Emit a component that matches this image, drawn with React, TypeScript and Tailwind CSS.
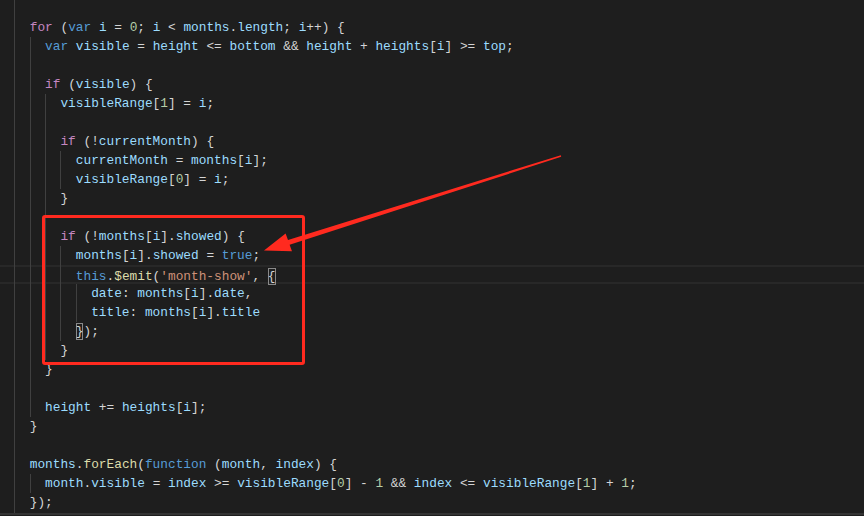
import React from "react";

// one char cell of the mono font (Liberation Mono @ 12.8px)
const CH = 7.68;

const code = [
  "",
  "    for (var i = 0; i < months.length; i++) {",
  "      var visible = height <= bottom && height + heights[i] >= top;",
  "",
  "      if (visible) {",
  "        visibleRange[1] = i;",
  "",
  "        if (!currentMonth) {",
  "          currentMonth = months[i];",
  "          visibleRange[0] = i;",
  "        }",
  "",
  "        if (!months[i].showed) {",
  "          months[i].showed = true;",
  "          this.$emit('month-show', {",
  "            date: months[i].date,",
  "            title: months[i].title",
  "          });",
  "        }",
  "      }",
  "",
  "      height += heights[i];",
  "    }",
  "",
  "    months.forEach(function (month, index) {",
  "      month.visible = index >= visibleRange[0] - 1 && index <= visibleRange[1] + 1;",
  "    });",
  "",
];

const CURRENT_LINE = 14;
// matched bracket pair: [line, col]
const boxed = new Set(["14:35", "17:10"]);

const control = new Set(["for", "if"]);
const storage = new Set(["var", "this", "true", "function"]);

type Tok = { text: string; color: string; col: number };

function tokenize(line: string): Tok[] {
  const re = /(\s+|'[^']*'|\d+|[A-Za-z_$][\w$]*|&&|<=|>=|\+=|\+\+|.)/g;
  const out: Tok[] = [];
  let m: RegExpExecArray | null;
  while ((m = re.exec(line))) {
    const t = m[0];
    const next = line[m.index + t.length];
    let color = "text-[#d4d4d4]";
    if (/^'/.test(t)) color = "text-[#ce9178]";
    else if (/^\d+$/.test(t)) color = "text-[#b5cea8]";
    else if (/^[A-Za-z_$]/.test(t)) {
      if (control.has(t)) color = "text-[#c586c0]";
      else if (storage.has(t)) color = "text-[#569cd6]";
      else if (next === "(") color = "text-[#dcdcaa]";
      else color = "text-[#9cdcfe]";
    }
    out.push({ text: t, color, col: m.index });
  }
  return out;
}

function indentOf(line: string) {
  return line.length - line.trimStart().length;
}

function guideCols(i: number): number[] {
  let ind: number;
  if (code[i].trim() === "") {
    let prev = -1;
    let next = -1;
    for (let j = i - 1; j >= 0; j--) if (code[j].trim()) { prev = indentOf(code[j]); break; }
    for (let j = i + 1; j < code.length; j++) if (code[j].trim()) { next = indentOf(code[j]); break; }
    ind = prev < 0 ? next : next < 0 ? prev : Math.min(prev, next);
    if (ind < 0) ind = 4;
  } else ind = indentOf(code[i]);
  const cols: number[] = [];
  for (let c = 2; c < ind; c += 2) cols.push(c);
  return cols;
}

function CodeLine({ line, idx }: { line: string; idx: number }) {
  const current = idx === CURRENT_LINE;
  return (
    <div
      className={`relative h-[19px] whitespace-pre leading-[19px] ${
        current ? "border-y-2 border-[#282828] leading-[15px]" : ""
      }`}
    >
      {guideCols(idx).map((c) => (
        <span
          key={c}
          className={`absolute w-px bg-[#404040] ${current ? "-top-[2px] -bottom-[2px]" : "inset-y-0"}`}
          style={{ left: c * CH }}
        />
      ))}
      {tokenize(line).map((t, k) =>
        boxed.has(`${idx}:${t.col}`) ? (
          <span
            key={k}
            className={`inline-block h-[17px] leading-[17px] shadow-[inset_0_0_0_1px_#8a8a8a] ${t.color}`}
          >
            {t.text}
          </span>
        ) : (
          <span key={k} className={`relative ${t.color}`}>
            {t.text}
          </span>
        )
      )}
    </div>
  );
}

function Annotation() {
  // arrow from (561,156) to tip (265,250), tapered shaft
  const pts =
    "560.8,155.2 288.0,240.0 285.6,233.6 264,250.5 292.0,251.2 289.6,244.8 561.2,156.8";
  return (
    <svg className="pointer-events-none absolute inset-0" width={864} height={516}>
      <rect
        x={43.5}
        y={216.5}
        width={260}
        height={147}
        rx={1.5}
        fill="none"
        stroke="#ff2a1f"
        strokeWidth={3}
      />
      <polygon points={pts} fill="#ff2a1f" />
    </svg>
  );
}

export default function App() {
  return (
    <div className="relative flex h-[516px] w-[864px] flex-col overflow-hidden bg-[#1e1e1e]">
      <div
        className="h-[513px] overflow-hidden text-[12.8px]"
        style={{ fontFamily: '"Liberation Mono", "DejaVu Sans Mono", monospace' }}
      >
        <div className="-ml-px -mt-px flex flex-col">
          {code.map((line, i) => (
            <CodeLine key={i} line={line} idx={i} />
          ))}
        </div>
      </div>
      <div className="h-[2px] bg-[#333333]" />
      <div className="h-px bg-[#1e1e1e]" />
      <Annotation />
    </div>
  );
}
